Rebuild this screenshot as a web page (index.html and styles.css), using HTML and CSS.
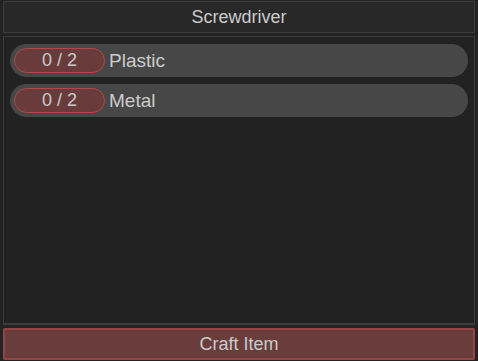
FILE: index.html
```
<!DOCTYPE html>
<html lang="en">
<head>
    <meta charset="UTF-8">
    <title>Screwdriver</title>
    <link rel="stylesheet" href="styles.css">
</head>
<body>
    <div class="window">
        <div class="title">Screwdriver</div>
        <div class="panel">
            <div class="req">
                <span class="count">0 / 2</span>
                <span class="name">Plastic</span>
            </div>
            <div class="req">
                <span class="count">0 / 2</span>
                <span class="name">Metal</span>
            </div>
        </div>
        <button class="craft">Craft Item</button>
    </div>
</body>
</html>
```

FILE: styles.css
```
body {
    margin: 0;
    background-color: #232323;
    font-family: "Liberation Sans", Arial, sans-serif;
    color: #cbcbcb;
}
.window {
    width: 472px;
    height: 359px;
    padding: 1px 3px 0 3px;
    display: flex;
    flex-direction: column;
}
.title {
    height: 30px;
    border: 1px solid #3c3c3c;
    background-color: #282828;
    display: flex;
    align-items: center;
    justify-content: center;
    font-size: 18px;
}
.panel {
    flex: 1;
    margin-top: 3px;
    border: 1px solid #3c3c3c;
    border-bottom-width: 2px;
    background-color: #222222;
    padding: 7px 6px;
    display: flex;
    flex-direction: column;
    gap: 7px;
}
.req {
    height: 33px;
    background-color: #474747;
    border-radius: 17px;
    display: flex;
    align-items: center;
    padding-left: 4px;
    gap: 4px;
}
.count {
    width: 89px;
    height: 23px;
    border: 1px solid #b04a4a;
    background-color: #6a3b3b;
    border-radius: 13px;
    display: flex;
    align-items: center;
    justify-content: center;
    font-size: 18px;
}
.name {
    font-size: 19px;
}
.craft {
    flex-shrink: 0;
    margin-top: 3px;
    height: 32px;
    border: 2px solid #974444;
    border-radius: 2px;
    background-color: #6a3d3d;
    color: #cbcbcb;
    font-family: inherit;
    font-size: 18px;
}
```
